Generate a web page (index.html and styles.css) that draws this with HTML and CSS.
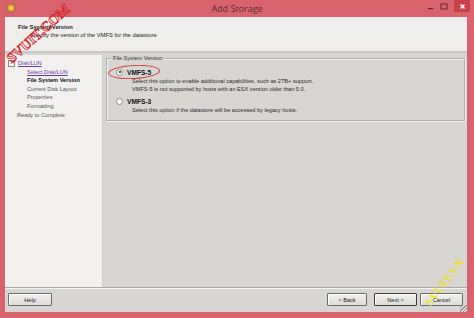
FILE: index.html
```html
<!DOCTYPE html>
<html>
<head>
<meta charset="utf-8">
<link rel="stylesheet" href="styles.css">
</head>
<body>
<div class="window">
  <div class="titlebar">
    <div class="appicon"><svg width="10" height="10" viewBox="0 0 10 10"><circle cx="5" cy="5" r="4.2" fill="#e2a23a" stroke="#8a5a1a" stroke-width="0.8"/><circle cx="5" cy="5" r="1.6" fill="#f6d27a"/></svg></div>
    <div class="title">Add Storage</div>
    <div class="controls">
      <span class="ctl min"><svg width="7" height="7" viewBox="0 0 7 7"><rect x="1" y="5" width="5" height="1.2" fill="#5a2a2e"/></svg></span>
      <span class="ctl max"><svg width="8" height="7" viewBox="0 0 8 7"><rect x="1" y="1" width="6" height="5" fill="none" stroke="#5a2a2e" stroke-width="1"/></svg></span>
      <span class="ctl close"><svg width="7" height="7" viewBox="0 0 7 7"><path d="M1.5 1.5 L5.5 5.5 M5.5 1.5 L1.5 5.5" stroke="#fff" stroke-width="1.3"/></svg></span>
    </div>
  </div>
  <div class="client">
    <div class="header">
      <div class="h-title">File System Version</div>
      <div class="h-sub">Specify the version of the VMFS for the datastore</div>
    </div>
    <div class="main">
      <div class="nav">
        <div class="nav-item top"><span class="tree-box">&minus;</span><span class="link">Disk/LUN</span></div>
        <div class="nav-item sub"><span class="link">Select Disk/LUN</span></div>
        <div class="nav-item sub current">File System Version</div>
        <div class="nav-item sub">Current Disk Layout</div>
        <div class="nav-item sub">Properties</div>
        <div class="nav-item sub">Formatting</div>
        <div class="nav-item top plain">Ready to Complete</div>
      </div>
      <div class="content">
        <div class="group">
          <div class="legend">File System Version</div>
          <div class="option">
            <div class="opt-head"><span class="radio checked"></span><span class="opt-label">VMFS-5</span><span class="circle-mark"></span></div>
            <div class="opt-desc">Select this option to enable additional capabilities, such as 2TB+ support.<br>VMFS-5 is not supported by hosts with an ESX version older than 5.0.</div>
          </div>
          <div class="option">
            <div class="opt-head"><span class="radio"></span><span class="opt-label">VMFS-3</span></div>
            <div class="opt-desc">Select this option if the datastore will be accessed by legacy hosts.</div>
          </div>
        </div>
      </div>
    </div>
    <div class="footer">
      <button class="btn help">Help</button>
      <div class="spacer"></div>
      <button class="btn back">&lt; Back</button>
      <button class="btn next">Next &gt;</button>
      <button class="btn cancel">Cancel</button>
      <span class="grip"></span>
    </div>
  </div>
  <div class="wm wm-red">SVUIT.COM</div>
  <div class="wm wm-yellow">SVUIT.VN</div>
</div>
</body>
</html>
```
FILE: styles.css
```css
html, body {
  margin: 0;
  padding: 0;
}
body {
  width: 474px;
  height: 318px;
  overflow: hidden;
  background: #d9636c;
  font-family: "Liberation Sans", Arial, sans-serif;
}
.window {
  position: relative;
  width: 474px;
  height: 318px;
  display: flex;
  flex-direction: column;
  background: #d9636c;
}
.titlebar {
  height: 16px;
  flex: none;
  display: flex;
  align-items: center;
  position: relative;
}
.appicon {
  width: 10px;
  height: 10px;
  margin-left: 6px;
  display: flex;
}
.title {
  position: absolute;
  left: 0;
  right: 0;
  top: 2px;
  text-align: center;
  font-family: "Open Sans", "Liberation Sans", sans-serif;
  font-size: 9px;
  color: #5b2f33;
  pointer-events: none;
}
.controls {
  margin-left: auto;
  display: flex;
  align-items: flex-start;
  height: 16px;
  margin-right: 4px;
}
.ctl {
  display: flex;
  align-items: center;
  justify-content: center;
  height: 12px;
}
.ctl.min { width: 13px; }
.ctl.max { width: 14px; margin-right: 3px; }
.ctl.close {
  width: 16px;
  background: #c9404a;
}
.client {
  margin: 1px 7px 0 5px;
  height: 295px;
  flex: none;
  background: #d8d6d2;
  display: flex;
  flex-direction: column;
}
.header {
  height: 36px;
  flex: none;
  background: #efeeec;
  border-bottom: 2px solid #c9c7c3;
  box-sizing: border-box;
  padding: 6px 0 0 13px;
  font-size: 5.8px;
  color: #1d1d1d;
}
.h-title {
  font-weight: bold;
  line-height: 8px;
}
.h-sub {
  padding-left: 12px;
  line-height: 8px;
}
.main {
  flex: 1;
  display: flex;
  border-bottom: 1px solid #a9a7a3;
  box-shadow: 0 1px 0 #f4f3f1;
}
.nav {
  width: 98px;
  margin-top: 2px;
  background: #f2f1ef;
  border-right: 1px solid #d0ceca;
  padding-top: 4px;
  box-sizing: border-box;
  font-size: 5.6px;
  color: #555;
}
.nav-item {
  height: 8.6px;
  line-height: 8.6px;
  white-space: nowrap;
}
.nav-item.top {
  padding-left: 3px;
  display: flex;
  align-items: center;
}
.nav-item.top.plain { padding-left: 12px; }
.nav-item.sub { padding-left: 22px; }
.nav-item.current {
  font-weight: bold;
  color: #111;
}
.link {
  color: #6a3aa8;
  text-decoration: underline;
}
.tree-box {
  width: 5px;
  height: 5px;
  border: 1px solid #888;
  font-size: 5px;
  line-height: 5px;
  text-align: center;
  margin-right: 3px;
  color: #333;
  background: #fff;
}
.content {
  flex: 1;
  padding: 5px 2px 0 3px;
}
.group {
  position: relative;
  border: 1px solid #b1afab;
  box-shadow: inset 1px 1px 0 #f3f2f0, 1px 1px 0 #f3f2f0;
  height: 63px;
  box-sizing: border-box;
  padding: 8px 0 0 9px;
  font-size: 5.6px;
  color: #222;
}
.legend {
  position: absolute;
  top: -4px;
  left: 4px;
  padding: 0 2px;
  background: #d8d6d2;
  line-height: 7px;
  color: #333;
}
.option { margin-bottom: 3px; }
.opt-head {
  position: relative;
  display: flex;
  align-items: center;
  height: 10px;
}
.radio {
  width: 5px;
  height: 5px;
  border: 1px solid #8d8b87;
  border-radius: 50%;
  background: #fbfbfb;
  margin-right: 4px;
  position: relative;
}
.radio.checked::after {
  content: "";
  position: absolute;
  left: 1.5px;
  top: 1.5px;
  width: 2px;
  height: 2px;
  border-radius: 50%;
  background: #111;
}
.opt-label {
  font-weight: bold;
  font-size: 6.6px;
  color: #111;
}
.circle-mark {
  position: absolute;
  left: -8px;
  top: -2px;
  width: 52px;
  height: 14px;
  border: 1.5px solid #d23a3a;
  border-radius: 50%;
  box-sizing: border-box;
  transform: rotate(-3deg);
}
.opt-desc {
  padding-left: 16px;
  line-height: 8px;
  color: #2a2a2a;
}
.footer {
  height: 24px;
  flex: none;
  box-sizing: border-box;
  display: flex;
  align-items: flex-start;
  padding: 5px 4px 0 3px;
  position: relative;
}
.spacer { flex: 1; }
.btn {
  height: 13px;
  padding: 0;
  font-family: "Liberation Sans", Arial, sans-serif;
  font-size: 5.6px;
  color: #222;
  background: linear-gradient(#f1f0ee, #dedcd8);
  border: 1px solid #6d6b67;
  border-radius: 1px;
  box-shadow: inset 1px 1px 0 #fff;
}
.btn.help { width: 44px; }
.btn.back { width: 40px; margin-right: 7px; }
.btn.next { width: 43px; margin-right: 3px; border-color: #3d3b37; }
.btn.cancel { width: 43px; }
.grip {
  position: absolute;
  right: 0;
  bottom: 0;
  width: 7px;
  height: 7px;
  background: repeating-linear-gradient(135deg, transparent 0 1.5px, #9a9894 1.5px 2.5px);
}
.wm {
  position: absolute;
  font-family: "Liberation Serif", "Times New Roman", serif;
  font-weight: bold;
  pointer-events: none;
  white-space: nowrap;
}
.wm-red {
  left: -1px;
  top: 26px;
  font-size: 14px;
  color: transparent;
  -webkit-text-stroke: 0.8px #d8242a;
  transform: rotate(-42deg);
}
.wm-yellow {
  left: 417px;
  top: 275px;
  font-size: 12px;
  color: #f2e21a;
  transform: rotate(-52deg);
  opacity: 0.85;
}
```
